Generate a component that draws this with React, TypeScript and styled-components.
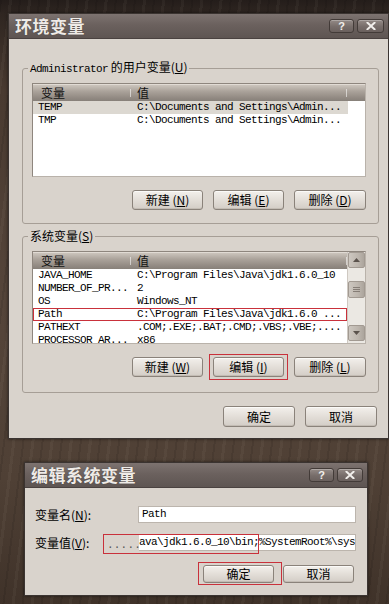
import React from 'react';
import styled, { createGlobalStyle, css } from 'styled-components';

const GlobalStyle = createGlobalStyle`
  html, body {
    margin: 0;
    padding: 0;
  }
  body {
    background: #3d3129;
    font-family: 'Noto Sans CJK SC', sans-serif;
  }
`;

const mono = css`
  font-family: 'Liberation Mono', 'Noto Sans CJK SC', monospace;
  font-size: 11px;
  letter-spacing: -0.6px;
`;

const Page = styled.div`
  width: 389px;
  height: 604px;
  overflow: hidden;
  box-sizing: border-box;
  padding-top: 13px;
  display: flex;
  flex-direction: column;
  background:
    repeating-linear-gradient(97deg, rgba(0, 0, 0, 0.09) 0 2px, transparent 2px 9px, rgba(255, 240, 220, 0.04) 9px 12px, transparent 12px 19px),
    linear-gradient(180deg, #241d1a 0, #2f2621 14px, #493a30 90px, #55453a 300px, #4f4035 480px, #3f3229 604px);
`;

const Window = styled.div<{ $width: number; $left: number; $top?: number }>`
  width: ${(p) => p.$width}px;
  margin-left: ${(p) => p.$left}px;
  margin-top: ${(p) => p.$top ?? 0}px;
  box-sizing: border-box;
  border: 1px solid #3b3431;
  background: #d9d3cc;
  box-shadow: 0 0 3px rgba(0, 0, 0, 0.55);
  display: flex;
  flex-direction: column;
  flex-shrink: 0;
`;

const TitleBar = styled.div`
  height: 24px;
  display: flex;
  align-items: center;
  justify-content: space-between;
  padding: 0 4px 0 6px;
  background: linear-gradient(180deg, #7d7370 0, #6b615e 45%, #5e5552 100%);
  border-bottom: 1px solid #4a4240;
`;

const TitleText = styled.div`
  color: #efebe7;
  font-size: 17px;
  font-weight: 700;
  letter-spacing: 0.5px;
  line-height: 24px;
  text-shadow: 0 0 1px rgba(0, 0, 0, 0.4);
`;

const TitleButtons = styled.div`
  display: flex;
  gap: 3px;
`;

const TitleButton = styled.div<{ $w: number }>`
  width: ${(p) => p.$w}px;
  height: 14px;
  box-sizing: border-box;
  border: 1px solid #433b38;
  border-radius: 3px;
  background: linear-gradient(180deg, #948a86 0, #776d6a 55%, #6a605d 100%);
  box-shadow: inset 0 1px 0 rgba(255, 255, 255, 0.25);
  display: flex;
  align-items: center;
  justify-content: center;
  color: #f2efec;
  font-family: 'Liberation Sans', sans-serif;
  font-size: 11px;
  font-weight: 700;
  line-height: 12px;
`;

const MainBody = styled.div`
  display: flex;
  flex-direction: column;
  gap: 5px;
  padding: 21px 0 11px 13px;
`;

const Group = styled.fieldset<{ $pt: number; $pb: number }>`
  margin: 0;
  width: 357px;
  box-sizing: border-box;
  border: 1px solid #a69e96;
  border-radius: 3px;
  padding: ${(p) => p.$pt}px 12px ${(p) => p.$pb}px 9px;
  min-inline-size: 0;
`;

const Legend = styled.legend`
  padding: 0 2px;
  margin-left: -4px;
  font-size: 12px;
  line-height: 14px;
  color: #000;
`;

const MonoText = styled.span`
  ${mono};
`;

const U = styled.span`
  text-decoration: underline;
`;

const List = styled.div<{ $h: number }>`
  height: ${(p) => p.$h}px;
  box-sizing: border-box;
  border: 1px solid #8e867e;
  border-right-color: #b9b2aa;
  border-bottom-color: #b9b2aa;
  background: #fff;
  display: flex;
  overflow: hidden;
`;

const ListMain = styled.div`
  flex: 1;
  display: flex;
  flex-direction: column;
  min-width: 0;
`;

const Header = styled.div`
  height: 17px;
  flex-shrink: 0;
  display: flex;
  background: linear-gradient(180deg, #cbc4bc 0, #aaa29a 40%, #928a83 80%, #878079 100%);
  border-top: 1px solid #e1dbd4;
  box-sizing: border-box;
`;

const HeadCell = styled.div<{ $w?: number; $pl: number }>`
  position: relative;
  width: ${(p) => (p.$w ? `${p.$w}px` : 'auto')};
  flex: ${(p) => (p.$w ? '0 0 auto' : '1')};
  padding-left: ${(p) => p.$pl}px;
  box-sizing: border-box;
  font-size: 12px;
  line-height: 16px;
  color: #111;

  &::after {
    content: '';
    position: absolute;
    right: 0;
    top: 4px;
    width: 1px;
    height: 8px;
    background: ${(p) => (p.$w ? 'rgba(255, 255, 255, 0.55)' : 'transparent')};
  }
`;

const Row = styled.div<{ $selected?: boolean; $marked?: boolean; $w?: number }>`
  width: ${(p) => (p.$w ? `${p.$w}px` : '100%')};
  height: 13px;
  flex-shrink: 0;
  display: flex;
  align-items: center;
  box-sizing: border-box;
  background: ${(p) => (p.$selected ? '#dcd8d1' : 'transparent')};
  outline: ${(p) => (p.$marked ? '1px solid #c9313b' : 'none')};
  outline-offset: -1px;
  color: #000;
  ${mono};
  line-height: 13px;
  white-space: nowrap;
`;

const Cell = styled.div<{ $w?: number; $pl: number }>`
  width: ${(p) => (p.$w ? `${p.$w}px` : 'auto')};
  flex: ${(p) => (p.$w ? '0 0 auto' : '1')};
  padding-left: ${(p) => p.$pl}px;
  box-sizing: border-box;
  overflow: hidden;
`;

const Scrollbar = styled.div`
  width: 17px;
  flex-shrink: 0;
  display: flex;
  flex-direction: column;
  background: #ebe8e3;
  border-left: 1px solid #cfc9c2;
`;

const ScrollPiece = styled.div<{ $h: number; $mt?: number }>`
  height: ${(p) => p.$h}px;
  margin-top: ${(p) => p.$mt ?? 0}px;
  box-sizing: border-box;
  border: 1px solid #a29a92;
  border-radius: 2px;
  background: linear-gradient(90deg, #cdc7c0 0, #bdb6ae 60%, #aca59d 100%);
  display: flex;
  align-items: center;
  justify-content: center;
`;

const ButtonRow = styled.div<{ $mt: number; $pr?: number }>`
  display: flex;
  justify-content: flex-end;
  align-items: center;
  gap: 10px;
  margin-top: ${(p) => p.$mt}px;
  padding-right: ${(p) => p.$pr ?? 0}px;
`;

/* red annotation frame drawn round a button in the screenshot */
const MarkFrame = styled.div<{ $pad: string; $m: string }>`
  display: flex;
  padding: ${(p) => p.$pad};
  margin: ${(p) => p.$m};
  outline: 1px solid #c9313b;
`;

const Btn = styled.button<{ $w: number; $h: number }>`
  width: ${(p) => p.$w}px;
  height: ${(p) => p.$h}px;
  box-sizing: border-box;
  padding: 0;
  border: 1px solid #8a827a;
  border-radius: 3px;
  background: linear-gradient(180deg, #f3f0ec 0, #e3ded8 50%, #d3cdc6 100%);
  box-shadow: inset 0 1px 0 #fbfaf8, inset 0 -1px 0 #c3bcb4;
  font-family: 'Noto Sans CJK SC', sans-serif;
  font-size: 12px;
  line-height: 14px;
  color: #000;
`;

const DialogBody = styled.div`
  padding: 18px 11px 12px 10px;
  display: flex;
  flex-direction: column;
`;

const FieldGrid = styled.div`
  display: grid;
  grid-template-columns: 68px 253px;
  row-gap: 11px;
  align-items: start;
`;

const Label = styled.div`
  font-size: 12px;
  line-height: 17px;
  color: #000;
`;

const TextBox = styled.div`
  margin-left: 35px;
  height: 17px;
  box-sizing: border-box;
  border: 1px solid #bcb5ad;
  background: #fff;
  padding-left: 3px;
  ${mono};
  line-height: 15px;
  color: #000;
`;

const ValueField = styled.div`
  display: flex;
  align-items: flex-start;
`;

const Marked = styled.div`
  display: flex;
  align-items: flex-start;
  height: 20px;
  box-sizing: border-box;
  outline: 1px solid #c9313b;
  outline-offset: -1px;
`;

const Dots = styled.div`
  width: 36px;
  height: 17px;
  box-sizing: border-box;
  padding: 0 0 0 4px;
  display: flex;
  align-items: flex-end;
  ${mono};
  line-height: 12px;
  color: #555;
  letter-spacing: 0.2px;
`;

const Segment = styled.div<{ $grow?: boolean }>`
  height: 17px;
  box-sizing: border-box;
  background: #fff;
  border-top: 1px solid #bcb5ad;
  border-bottom: 1px solid #bcb5ad;
  ${(p) => (p.$grow ? 'flex: 1; border-right: 1px solid #bcb5ad;' : '')}
  ${mono};
  line-height: 15px;
  color: #000;
  white-space: nowrap;
  overflow: hidden;
`;

const userVars = [
  { name: 'TEMP', value: 'C:\\Documents and Settings\\Admin...' },
  { name: 'TMP', value: 'C:\\Documents and Settings\\Admin...' },
];

const sysVars = [
  { name: 'JAVA_HOME', value: 'C:\\Program Files\\Java\\jdk1.6.0_10' },
  { name: 'NUMBER_OF_PR...', value: '2' },
  { name: 'OS', value: 'Windows_NT' },
  { name: 'Path', value: 'C:\\Program Files\\Java\\jdk1.6.0 ...' },
  { name: 'PATHEXT', value: '.COM;.EXE;.BAT;.CMD;.VBS;.VBE;....' },
  { name: 'PROCESSOR_AR...', value: 'x86' },
];

const CloseGlyph = () => (
  <svg width="10" height="8" viewBox="0 0 10 8">
    <path d="M1.5 0.8 L8.5 7.2 M8.5 0.8 L1.5 7.2" stroke="#f2efec" strokeWidth="2" strokeLinecap="square" />
  </svg>
);

const Caption: React.FC<{ title: string; helpW: number; closeW: number }> = ({ title, helpW, closeW }) => (
  <TitleBar>
    <TitleText>{title}</TitleText>
    <TitleButtons>
      <TitleButton $w={helpW}>?</TitleButton>
      <TitleButton $w={closeW}>
        <CloseGlyph />
      </TitleButton>
    </TitleButtons>
  </TitleBar>
);

const ListHeader: React.FC<{ full?: boolean }> = ({ full }) => (
  <Header>
    <HeadCell $w={98} $pl={8}>变量</HeadCell>
    <HeadCell $w={216} $pl={6}>值</HeadCell>
    {full && <HeadCell $pl={0} />}
  </Header>
);

const Arrow: React.FC<{ up?: boolean }> = ({ up }) => (
  <svg width="7" height="4" viewBox="0 0 7 4">
    <polygon points={up ? '0,4 3.5,0 7,4' : '0,0 3.5,4 7,0'} fill="#5b534d" />
  </svg>
);

const Grip = () => (
  <svg width="7" height="7" viewBox="0 0 7 7">
    <path d="M0 1.5 H7 M0 3.5 H7 M0 5.5 H7" stroke="#857d76" strokeWidth="1" />
  </svg>
);

export default function App() {
  return (
    <>
      <GlobalStyle />
      <Page>
        <Window $width={381} $left={8}>
          <Caption title="环境变量" helpW={25} closeW={27} />
          <MainBody>
            <Group $pt={7} $pb={13}>
              <Legend>
                <MonoText>Administrator</MonoText> 的用户变量(<U>U</U>)
              </Legend>
              <List $h={94}>
                <ListMain>
                  <ListHeader full />
                  {userVars.map((v, i) => (
                    <Row key={v.name} $w={315} $selected={i === 0}>
                      <Cell $w={98} $pl={5}>{v.name}</Cell>
                      <Cell $pl={6}>{v.value}</Cell>
                    </Row>
                  ))}
                </ListMain>
              </List>
              <ButtonRow $mt={13}>
                <Btn $w={71} $h={20}>新建 (<U>N</U>)</Btn>
                <Btn $w={71} $h={20}>编辑 (<U>E</U>)</Btn>
                <Btn $w={72} $h={20}>删除 (<U>D</U>)</Btn>
              </ButtonRow>
            </Group>
            <Group $pt={8} $pb={15}>
              <Legend>系统变量(<U>S</U>)</Legend>
              <List $h={93}>
                <ListMain>
                  <ListHeader />
                  {sysVars.map((v) => (
                    <Row key={v.name} $marked={v.name === 'Path'}>
                      <Cell $w={98} $pl={5}>{v.name}</Cell>
                      <Cell $pl={6}>{v.value}</Cell>
                    </Row>
                  ))}
                </ListMain>
                <Scrollbar>
                  <ScrollPiece $h={16}>
                    <Arrow up />
                  </ScrollPiece>
                  <ScrollPiece $h={17} $mt={13}>
                    <Grip />
                  </ScrollPiece>
                  <ScrollPiece $h={16} $mt={27}>
                    <Arrow />
                  </ScrollPiece>
                </Scrollbar>
              </List>
              <ButtonRow $mt={13}>
                <Btn $w={71} $h={20}>新建 (<U>W</U>)</Btn>
                <MarkFrame $pad="2px 3px 2px 3px" $m="-3px -3px -3px -3px">
                  <Btn $w={71} $h={20}>编辑 (<U>I</U>)</Btn>
                </MarkFrame>
                <Btn $w={72} $h={20}>删除 (<U>L</U>)</Btn>
              </ButtonRow>
            </Group>
            <ButtonRow $mt={8} $pr={11}>
              <Btn $w={72} $h={21}>确定</Btn>
              <Btn $w={72} $h={21}>取消</Btn>
            </ButtonRow>
          </MainBody>
        </Window>

        <Window $width={344} $left={24} $top={23}>
          <Caption title="编辑系统变量" helpW={25} closeW={26} />
          <DialogBody>
            <FieldGrid>
              <Label>变量名(<U>N</U>):</Label>
              <TextBox>Path</TextBox>
              <Label>变量值(<U>V</U>):</Label>
              <ValueField>
                <Marked>
                  <Dots>......</Dots>
                  <Segment>ava\jdk1.6.0_10\bin;</Segment>
                </Marked>
                <Segment $grow>%SystemRoot%\sys</Segment>
              </ValueField>
            </FieldGrid>
            <ButtonRow $mt={11} $pr={2}>
              <MarkFrame $pad="2px 7px 1px 4px" $m="-3px -8px -2px -5px">
                <Btn $w={71} $h={18}>确定</Btn>
              </MarkFrame>
              <Btn $w={71} $h={18}>取消</Btn>
            </ButtonRow>
          </DialogBody>
        </Window>
      </Page>
    </>
  );
}
